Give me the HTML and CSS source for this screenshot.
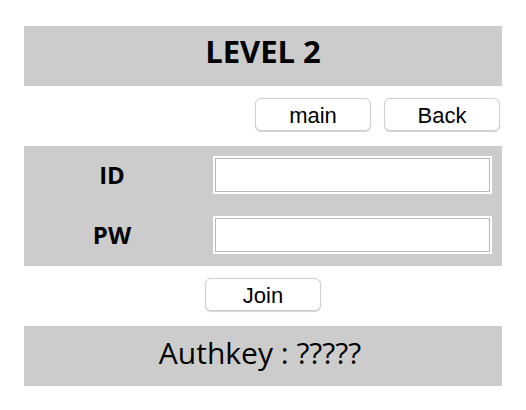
FILE: index.html
```html
<!DOCTYPE html>
<html>
<head>
<meta charset="utf-8">
<link rel="stylesheet" href="styles.css">
</head>
<body>
<div class="page">
  <h1 class="band title">LEVEL 2</h1>
  <div class="nav">
    <button class="btn">main</button>
    <button class="btn">Back</button>
  </div>
  <form class="band form">
    <label class="label" for="id">ID</label>
    <input class="field" id="id" type="text">
    <label class="label" for="pw">PW</label>
    <input class="field" id="pw" type="password">
  </form>
  <div class="join-row">
    <button class="btn">Join</button>
  </div>
  <div class="band auth">Authkey : ?????</div>
</div>
</body>
</html>
```

FILE: styles.css
```css
html, body {
  margin: 0;
  padding: 0;
  background: #ffffff;
}
.page {
  padding: 26px 24px 0 24px;
  font-family: "Open Sans", sans-serif;
  color: #000;
}
.band {
  background: #cccccc;
  margin: 0;
}
.title {
  height: 60px;
  box-sizing: border-box;
  line-height: 50px;
  padding-bottom: 10px;
  font-size: 31px;
  font-weight: 700;
  text-align: center;
}
.nav {
  display: flex;
  justify-content: flex-end;
  gap: 13px;
  padding: 12px 2px 0 0;
}
.btn {
  width: 116px;
  height: 33px;
  box-sizing: border-box;
  background: #ffffff;
  border: 1px solid #cfcfcf;
  border-radius: 6px;
  box-shadow: 0 1px 1px rgba(0,0,0,0.18);
  font-family: "Liberation Sans", Arial, sans-serif;
  font-size: 22px;
  line-height: 1;
  padding: 3px 0 0 0;
  color: #000;
}
.form {
  margin-top: 15px;
  display: grid;
  grid-template-columns: 176px 1fr;
  grid-template-rows: 38px 38px;
  column-gap: 13px;
  row-gap: 22px;
  padding: 10px 10px 12px 0;
  align-items: center;
}
.label {
  text-align: center;
  font-size: 24px;
  font-weight: 700;
  line-height: 1;
}
.field {
  width: 100%;
  height: 38px;
  box-sizing: border-box;
  margin: 0;
  padding: 0 4px;
  background: #fff;
  border: 2px solid #ffffff;
  outline: 1px solid #b8b8b8;
  outline-offset: -3px;
}
.join-row {
  display: flex;
  justify-content: center;
  padding-top: 12px;
}
.auth {
  margin-top: 15px;
  height: 60px;
  box-sizing: border-box;
  line-height: 54px;
  padding: 0 6px 6px 0;
  text-align: center;
  font-size: 30px;
  font-weight: 400;
}
```
